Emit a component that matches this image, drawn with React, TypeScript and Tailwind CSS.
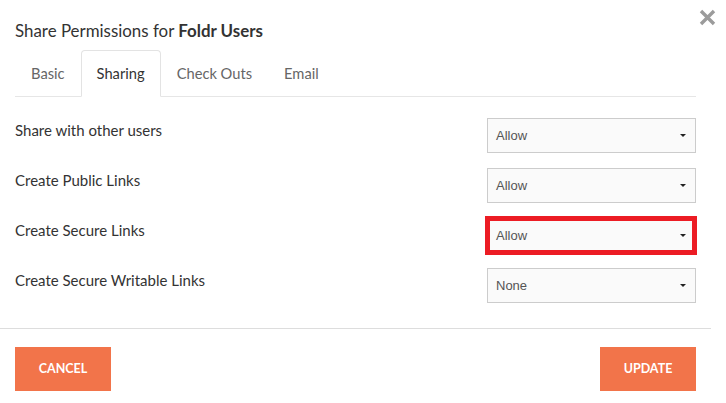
import { useState } from 'react';

type Permission = { label: string; value: string; highlighted?: boolean };

const permissions: Permission[] = [
  { label: 'Share with other users', value: 'Allow' },
  { label: 'Create Public Links', value: 'Allow' },
  { label: 'Create Secure Links', value: 'Allow', highlighted: true },
  { label: 'Create Secure Writable Links', value: 'None' },
];

const tabs = ['Basic', 'Sharing', 'Check Outs', 'Email'];

function SelectBox({ value, highlighted }: { value: string; highlighted?: boolean }) {
  return (
    <div className="relative w-[209px] h-[35px] shrink-0">
      <div className="flex h-full items-center justify-between border border-[#cccccc] bg-[#fafafa] pl-[8px] pr-[9px] text-[13px] text-[#555555] [font-family:'Liberation_Sans',Arial,sans-serif]">
        <span>{value}</span>
        <span className="h-0 w-0 border-x-[3px] border-t-[3px] border-x-transparent border-t-[#222222]" />
      </div>
      {highlighted && (
        <div className="pointer-events-none absolute -left-[2px] -top-[2px] -right-[1px] -bottom-[2px] border-[5px] border-[#ec1c24]" />
      )}
    </div>
  );
}

export default function App() {
  const [activeTab, setActiveTab] = useState('Sharing');

  return (
    <div className="relative w-[726px] h-[403px] bg-white text-[#333333] [font-family:Lato,'Noto_Sans',sans-serif] overflow-hidden">
      <div className="w-[711px]">
        {/* header */}
        <div className="px-[15px] pt-[20px]">
          <h4 className="text-[16.9px] leading-[22px]">
            Share Permissions for <span className="font-bold">Foldr Users</span>
          </h4>
        </div>

        {/* tabs */}
        <div className="mx-[15px] mt-[8px] flex border-b border-[#e6e6e6]">
          {tabs.map(tab => (
            <button
              key={tab}
              onClick={() => setActiveTab(tab)}
              className={
                tab === activeTab
                  ? '-mb-px flex h-[47px] items-center rounded-t-[4px] border border-[#e3e3e3] border-b-white bg-white px-[15px] text-[14.7px] text-[#333333]'
                  : '-mb-px flex h-[47px] items-center border border-transparent px-[15px] text-[14.7px] text-[#666666]'
              }
            >
              {tab}
            </button>
          ))}
        </div>

        {/* permission rows */}
        <div className="mt-[21px] flex flex-col gap-[15px] px-[15px]">
          {permissions.map(p => (
            <div key={p.label} className="flex items-start justify-between">
              <label className="pt-[2px] text-[15px] leading-[20px] text-[#333333]">{p.label}</label>
              <SelectBox value={p.value} highlighted={p.highlighted} />
            </div>
          ))}
        </div>

        {/* footer */}
        <div className="mt-[25px] border-t border-[#dddddd] px-[15px] pt-[18px]">
          <div className="flex justify-between">
            <button className="flex h-[44px] w-[96px] items-center justify-center bg-[#f2744a] text-[12.5px] font-bold text-white">
              CANCEL
            </button>
            <button className="flex h-[44px] w-[96px] items-center justify-center bg-[#f2744a] text-[12.5px] font-bold text-white">
              UPDATE
            </button>
          </div>
        </div>
      </div>

      {/* close */}
      <button className="absolute left-[699px] top-[9px] h-[17px] w-[17px]">
        <svg viewBox="0 0 17 17" className="h-[17px] w-[17px]">
          <path d="M2 2 L15 15 M15 2 L2 15" stroke="#9b9b9b" strokeWidth="3.4" strokeLinecap="butt" />
        </svg>
      </button>
    </div>
  );
}
